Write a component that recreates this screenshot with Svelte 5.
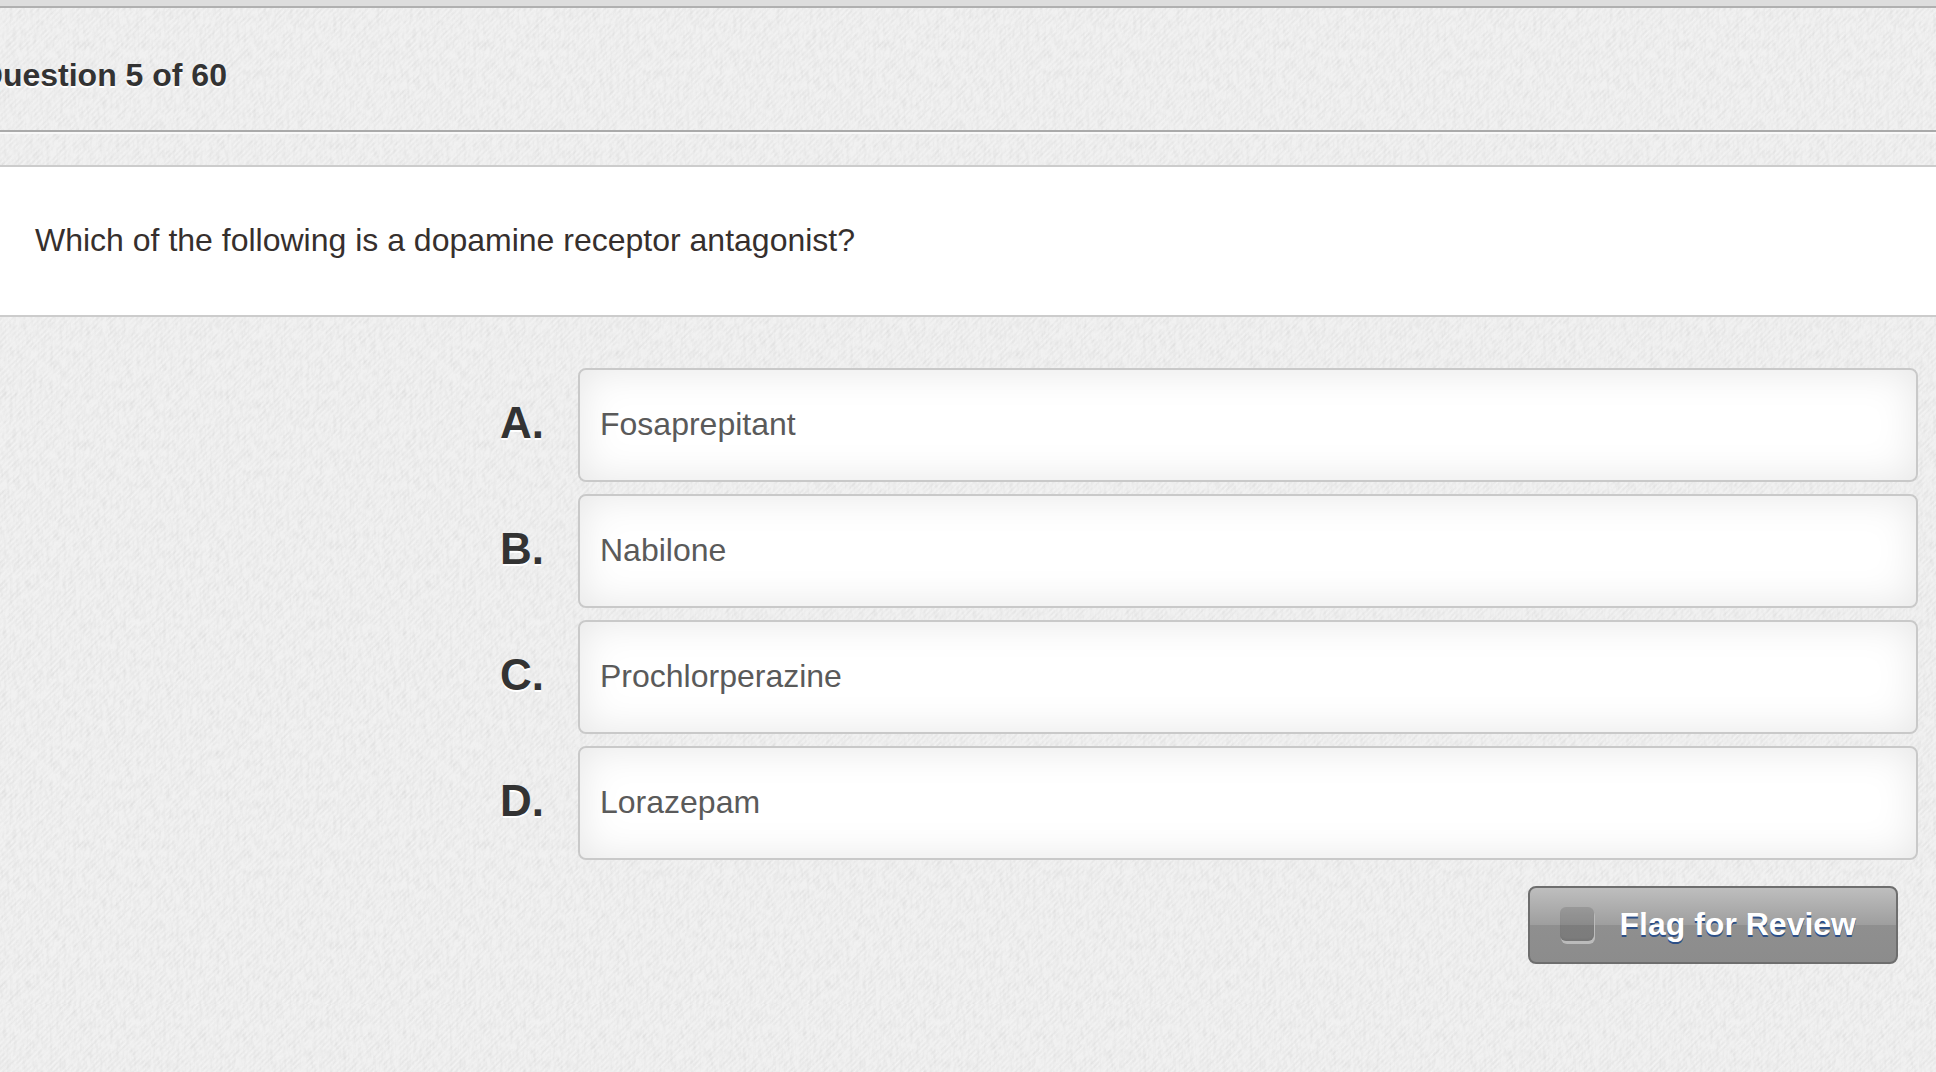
<script lang="ts">
	const current = 5;
	const total = 60;
	const question = 'Which of the following is a dopamine receptor antagonist?';
	const answers = [
		{ letter: 'A', text: 'Fosaprepitant' },
		{ letter: 'B', text: 'Nabilone' },
		{ letter: 'C', text: 'Prochlorperazine' },
		{ letter: 'D', text: 'Lorazepam' }
	];

	let selected = $state('');
	let flagged = $state(false);
</script>

<div class="page">
	<header>
		<h1>Question {current} of {total}</h1>
	</header>

	<main>
		<section class="question">
			<p>{question}</p>
		</section>

		<ol class="answers">
			{#each answers as answer (answer.letter)}
				<li>
					<span class="letter" id="letter-{answer.letter}">{answer.letter}.</span>
					<button
						id="answer-{answer.letter}"
						class="answer"
						class:selected={selected === answer.letter}
						aria-labelledby="letter-{answer.letter} answer-{answer.letter}"
						aria-pressed={selected === answer.letter}
						onclick={() => (selected = answer.letter)}
					>{answer.text}</button>
				</li>
			{/each}
		</ol>

		<div class="tools">
			<label class="flag">
				<input type="checkbox" bind:checked={flagged} />
				<span>Flag for Review</span>
			</label>
		</div>
	</main>
</div>

<style>
	:global(body) {
		margin: 0;
		overflow-x: hidden;
		background-color: #eee;
		/* woven paper: soft noise over fine diagonal threads */
		background-image:
			url("data:image/svg+xml,%3Csvg xmlns='http://www.w3.org/2000/svg' width='400' height='400' color-interpolation-filters='sRGB'%3E%3Cfilter id='n' x='0' y='0' width='100%25' height='100%25'%3E%3CfeTurbulence type='fractalNoise' baseFrequency='0.12' numOctaves='3' stitchTiles='stitch'/%3E%3CfeColorMatrix values='0 0 0 0 0.945 0 0 0 0 0.945 0 0 0 0 0.945 2 0 0 0 -0.5'/%3E%3C/filter%3E%3Cfilter id='d' x='0' y='0' width='100%25' height='100%25'%3E%3CfeTurbulence type='fractalNoise' baseFrequency='0.3 0.1' numOctaves='2' seed='4' stitchTiles='stitch'/%3E%3CfeColorMatrix values='0 0 0 0 0.6 0 0 0 0 0.6 0 0 0 0 0.6 0.24 0 0 0 -0.1'/%3E%3C/filter%3E%3Crect width='400' height='400' filter='url(%23n)'/%3E%3Crect width='400' height='400' filter='url(%23d)'/%3E%3C/svg%3E"),
			repeating-linear-gradient(135deg, #f4f4f4 0, #e6e6e6 2px, #f4f4f4 4px);
	}

	.page {
		color: #333;
		font-family: "Liberation Sans", Helvetica, Arial, sans-serif;
		font-size: 32px;
		line-height: 40px;
	}

	header {
		padding: 47px 0 35px;
		border-top: 2px solid #b0b0b0;
		border-bottom: 2px solid #aaa;
		box-shadow: 0 -6px 0 #ddd, 0 2px 0 #f8f8f8;
		margin-top: 6px;
	}

	/* the heading starts beyond the left edge of the window */
	h1 {
		margin: 0 0 0 -22px;
		font-size: 32px;
		line-height: 40px;
		text-shadow: 0 2px 0 #fff;
		white-space: nowrap;
	}

	.question {
		margin-top: 33px;
		padding: 53px 35px 55px;
		background: #fff;
		border-top: 2px solid #ccc;
		border-bottom: 2px solid #ccc;
		color: #362f2d;
	}

	.question p {
		margin: 0;
	}

	.answers {
		display: flex;
		flex-direction: column;
		gap: 12px;
		margin: 0;
		padding: 51px 18px 0 0;
		list-style: none;
	}

	.answers li {
		display: flex;
		align-items: stretch;
	}

	.letter {
		box-sizing: border-box;
		width: 578px;
		padding: 30px 34px 0 0;
		flex-shrink: 0;
		text-align: right;
		font-size: 44px;
		line-height: 50px;
		font-weight: bold;
		text-shadow: 0 2px 0 #fff;
	}

	.answer {
		flex: 1;
		padding: 34px 20px 36px;
		border: 2px solid #c9c9c9;
		border-radius: 8px;
		background: #fff;
		box-shadow: inset 0 0 40px rgba(0, 0, 0, 0.1);
		color: #5a5a5a;
		font: inherit;
		text-align: left;
		cursor: pointer;
	}

	.answer.selected {
		border-color: #6f6f6f;
		background: #f3f3f3;
	}

	.tools {
		display: flex;
		justify-content: flex-end;
		padding: 26px 38px 40px 0;
	}

	.flag {
		display: flex;
		align-items: center;
		gap: 26px;
		padding: 16px 40px 18px 30px;
		border: 2px solid #6e6e6e;
		border-radius: 8px;
		background: linear-gradient(#bebebe, #9e9e9e 50%, #8f8f8f 50%, #8c8c8c);
		color: #fff;
		font-weight: bold;
		text-shadow: 0 2px 0 #2c4f87;
		cursor: pointer;
	}

	.flag input {
		appearance: none;
		width: 34px;
		height: 34px;
		margin: 0;
		border-radius: 6px;
		background: rgba(0, 0, 0, 0.12);
		box-shadow: 1px 3px 0 #bbb, inset 0 -2px 2px rgba(0, 0, 0, 0.05);
		cursor: pointer;
	}

	.flag input:checked {
		background: #2c4f87;
	}
</style>
